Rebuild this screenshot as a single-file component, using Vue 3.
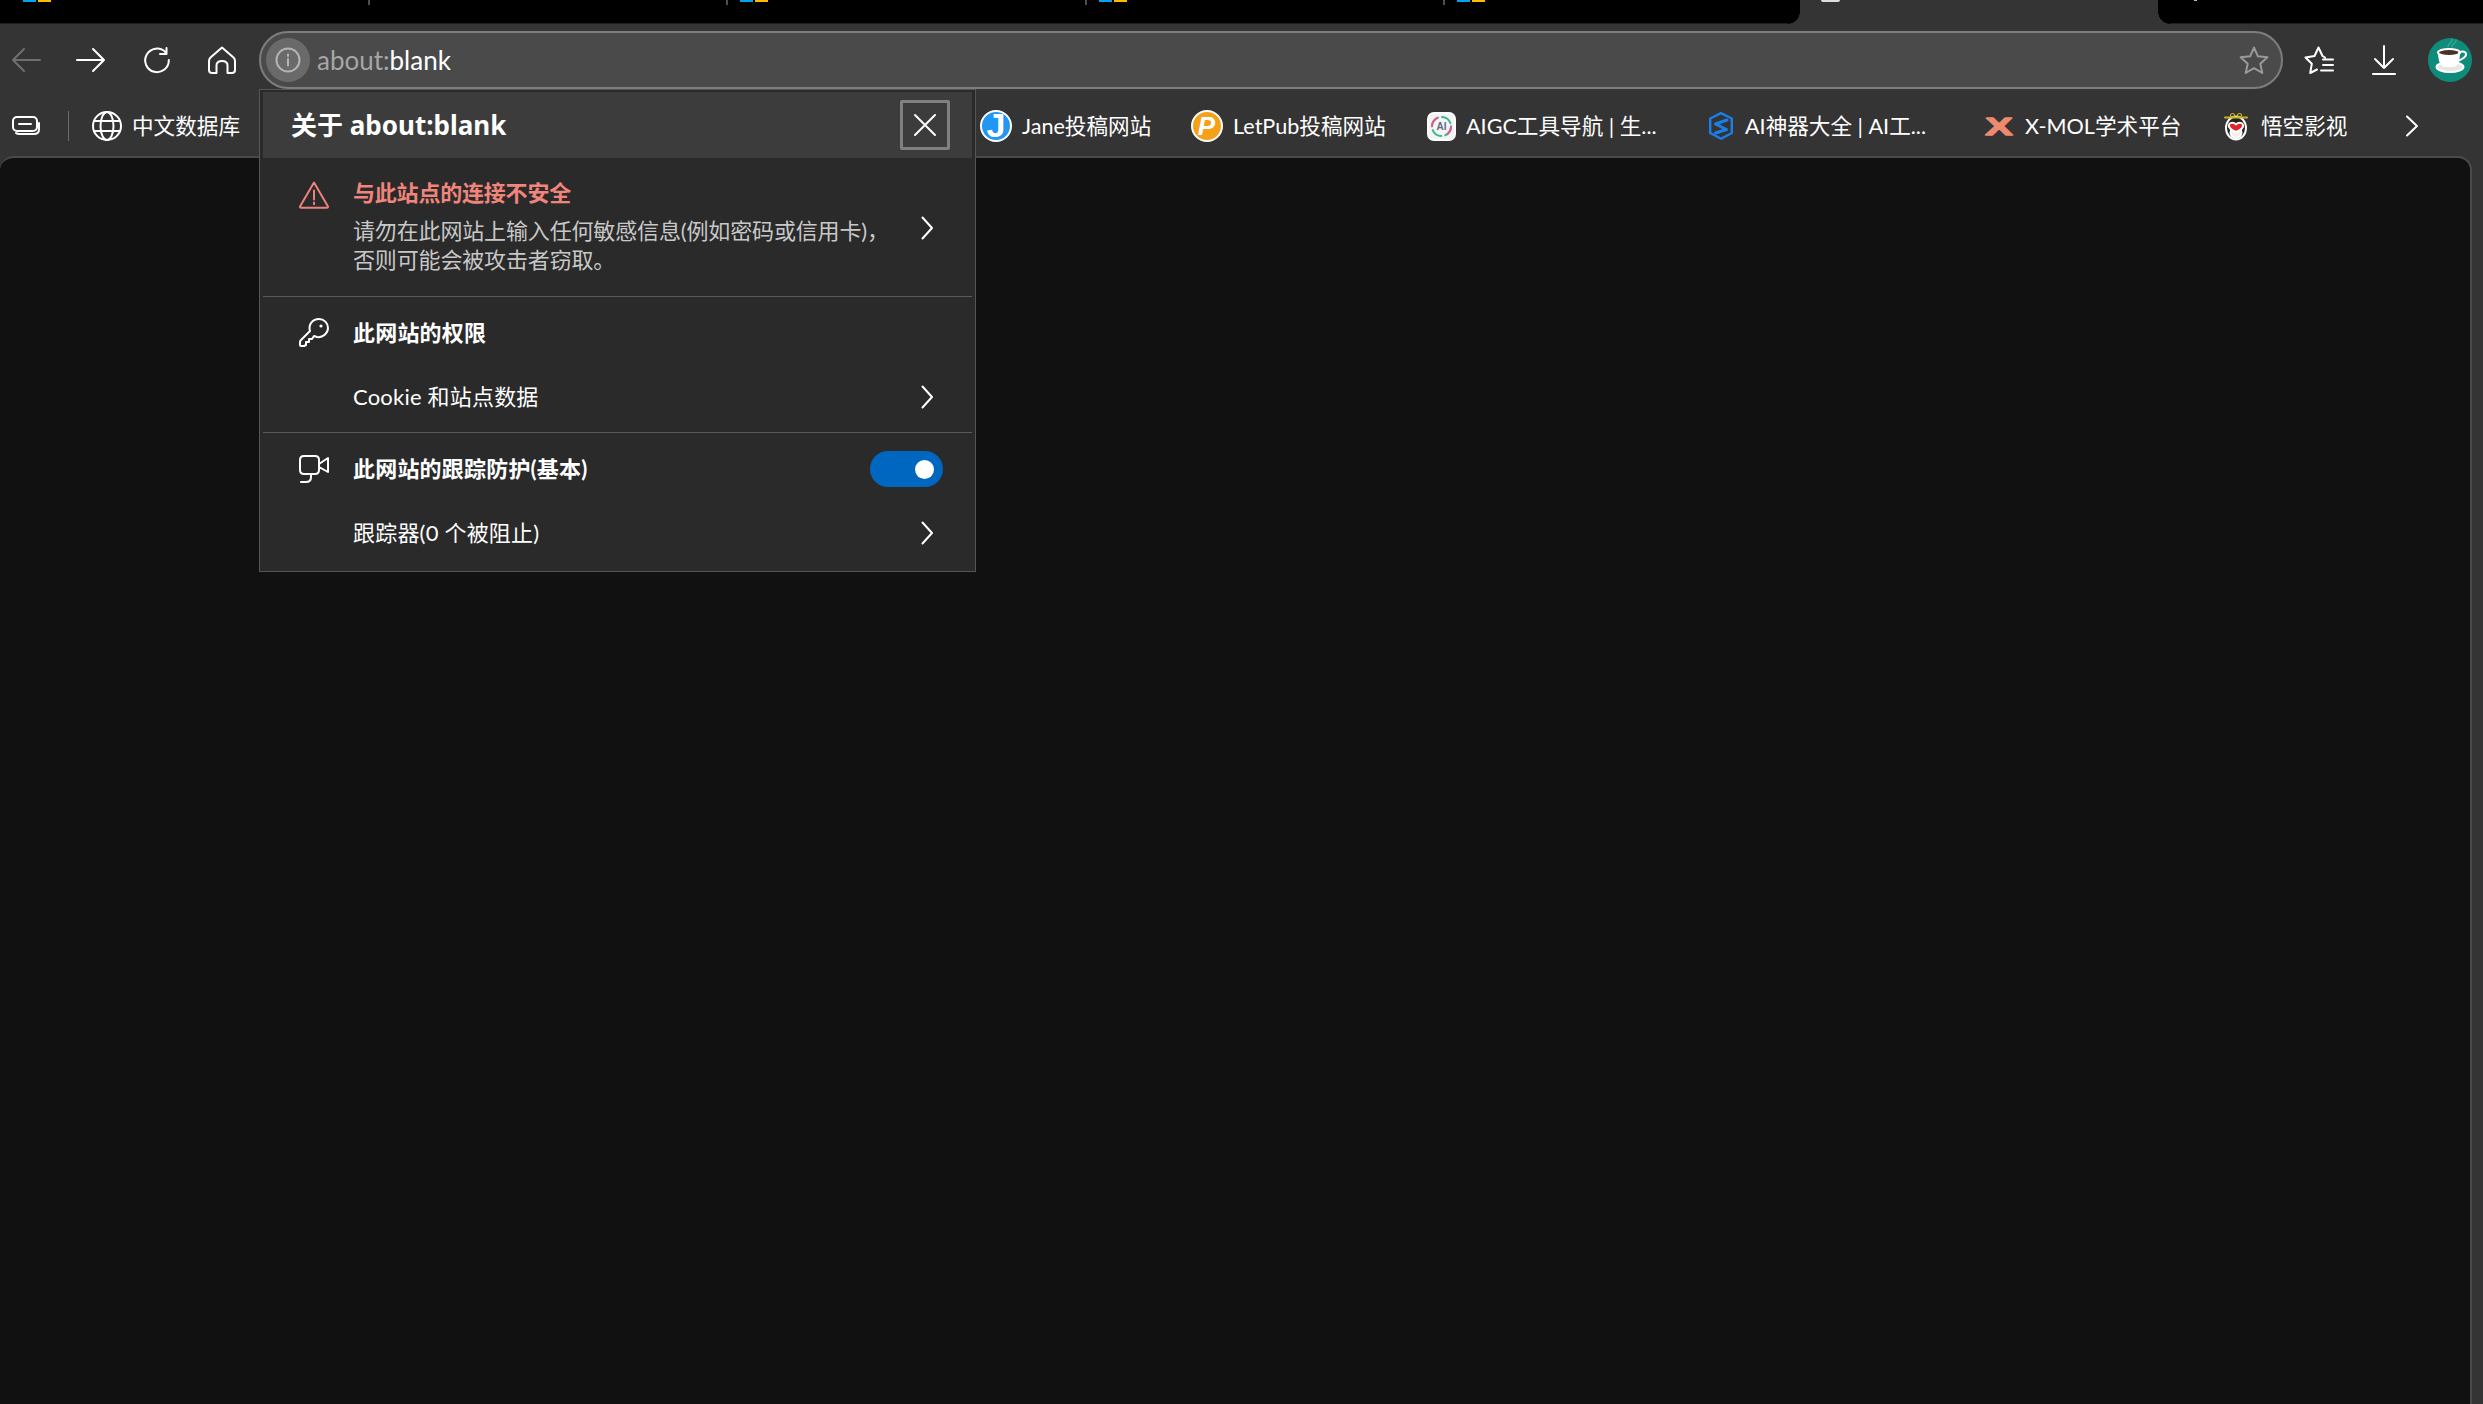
<template>
  <div class="browser">
    <div class="tabstrip">
      <div v-for="tab in tabs" :key="tab.id" class="tab" :class="{ 'tab--active': tab.active, 'tab--sep': tab.sep }">
        <span v-if="tab.logo" class="tab__logo"><i class="blue"></i><i class="yellow"></i></span>
        <span v-if="tab.active" class="tab__favicon"></span>
        <span v-if="tab.dot" class="tab__dot"></span>
      </div>
    </div>

    <div class="toolbar">
      <div class="navrow">
        <div class="navbtns">
          <button class="navbtn navbtn--off">
            <svg width="30" height="26" viewBox="0 0 30 26"><path d="M29 13H2M13 2 2 13l11 11" /></svg>
          </button>
          <button class="navbtn">
            <svg width="30" height="26" viewBox="0 0 30 26"><path d="M1 13h27M17 2l11 11-11 11" /></svg>
          </button>
          <button class="navbtn">
            <svg width="28" height="26" viewBox="0 0 28 26"><path d="M22.5 5.2A11.8 11.8 0 1 0 25.8 13M23.5 1v6h-6.5" /></svg>
          </button>
          <button class="navbtn">
            <svg width="28" height="28" viewBox="0 0 28 28"><path d="M14 1.5 25.5 11.5Q27 13 27 15V24Q27 27 24 27H19.5V19.5Q19.5 15 14 15T8.5 19.5V27H4Q1 27 1 24V15Q1 13 2.5 11.5Z" /></svg>
          </button>
        </div>

        <div class="addressbar">
          <span class="siteinfo">
            <svg width="26" height="26" viewBox="0 0 26 26"><circle cx="13" cy="13" r="11.5" /><path d="M13 12v6.5M13 7.5v1.6" /></svg>
          </span>
          <span class="url"><span class="url__scheme">about:</span>blank</span>
          <svg class="addr-star" width="30" height="29" viewBox="0 0 30 29"><path d="M15 1.6l3.9 8.7 9.5 1-7.1 6.4 2 9.3L15 22.2 6.7 27l2-9.3-7.1-6.4 9.5-1z" /></svg>
        </div>

        <div class="actions">
          <svg class="act-fav" width="30" height="29" viewBox="0 0 30 29"><path d="M21 11.5 18.5 10 14.5 1.5 10.5 10 1.5 11.5 7.8 17.8 6.2 27 13 23.5M19 13.5h10M19 19h10M17 24.5h12" /></svg>
          <svg class="act-dl" width="24" height="30" viewBox="0 0 24 30"><path d="M12 1v22M3 14l9 9 9-9M1 29h22" /></svg>
          <span class="avatar">
            <svg width="44" height="44" viewBox="0 0 44 44">
              <path class="steam" d="M20 9c-1-3 5-4 4-8M24 9c-1-3 5-4 4-7" />
              <ellipse cx="22" cy="29" rx="13.5" ry="5" fill="#e8e6e2" />
              <path d="M10 14h22c0 8-2 14-6 15H16c-4-1-6-7-6-15z" fill="#fff" />
              <ellipse cx="21" cy="14.5" rx="11" ry="3.6" fill="#4b3226" />
              <path class="handle" d="M31 15c3-3 8-1 7 2s-4 4-8 6" />
            </svg>
          </span>
        </div>
      </div>

      <div class="bookmarks">
        <svg class="collections" width="28" height="20" viewBox="0 0 28 20">
          <rect x="1" y="1" width="24" height="14" rx="4" />
          <path d="M7 8h12M27 7v6q0 5-5 5H8q-3 0-4-1" />
        </svg>
        <span class="bm-divider"></span>
        <div class="bm bm--first">
          <svg class="globe" width="30" height="30" viewBox="0 0 30 30">
            <circle cx="15" cy="15" r="14" />
            <ellipse cx="15" cy="15" rx="6.5" ry="14" />
            <path d="M2.5 10h25M2.5 20h25" />
          </svg>
          <span class="bm__text">中文数据库</span>
        </div>
        <div class="bm">
          <svg width="30" height="30" viewBox="0 0 30 30">
            <circle cx="15" cy="15" r="15" fill="#2196f3" />
            <text x="15" y="26" class="logo-j">J</text>
          </svg>
          <span class="bm__text">Jane投稿网站</span>
        </div>
        <div class="bm">
          <svg width="30" height="30" viewBox="0 0 30 30">
            <circle cx="15" cy="15" r="15" fill="#f5a01a" />
            <text x="14.5" y="24" class="logo-p">P</text>
          </svg>
          <span class="bm__text">LetPub投稿网站</span>
        </div>
        <div class="bm">
          <svg width="27" height="27" viewBox="0 0 27 27">
            <rect width="27" height="27" rx="6" fill="#f4f4f4" />
            <circle cx="13.5" cy="13.5" r="9.5" fill="none" stroke="#3db88b" stroke-width="2" stroke-dasharray="11 4" />
            <circle cx="13.5" cy="13.5" r="9.5" fill="none" stroke="#e5578c" stroke-width="2" stroke-dasharray="8 22 10 30" />
            <text x="13.5" y="17" class="logo-ai">AI</text>
          </svg>
          <span class="bm__text">AIGC工具导航 | 生...</span>
        </div>
        <div class="bm bm--wide">
          <svg width="24" height="28" viewBox="0 0 24 28">
            <path d="M12 1.2 22.8 6.5V21L12 26.8 1.2 21V6.5Z" class="shield" />
            <path d="M18 8 6.5 12l11 5.5L6.5 21" class="shield shield--in" />
          </svg>
          <span class="bm__text">AI神器大全 | AI工...</span>
        </div>
        <div class="bm bm--wide">
          <svg width="28" height="18" viewBox="0 0 28 18">
            <text x="14" y="17.5" class="logo-x" textLength="27" lengthAdjust="spacingAndGlyphs">X</text>
          </svg>
          <span class="bm__text">X-MOL学术平台</span>
        </div>
        <div class="bm bm--wukong">
          <svg width="28" height="28" viewBox="0 0 28 28">
            <ellipse cx="14" cy="16" rx="10" ry="11.5" fill="#2a1f1a" />
            <path d="M3 5.5h22" stroke="#c8b42a" stroke-width="2" />
            <circle cx="10.5" cy="3.5" r="2" fill="none" stroke="#c8b42a" stroke-width="1.2" />
            <circle cx="17.5" cy="3.5" r="2" fill="none" stroke="#c8b42a" stroke-width="1.2" />
            <ellipse cx="14" cy="20.5" rx="5.5" ry="5.5" fill="#f3efec" />
            <path d="M14 20C9 18 6 15 7 12.5c1-2.5 5-2.5 7 0 2-2.5 6-2.5 7 0 1 2.500-2 5.500-7 7.500z" fill="#e2212b" />
          </svg>
          <span class="bm__text">悟空影视</span>
        </div>
        <svg class="bm-more" width="14" height="22" viewBox="0 0 14 22"><path d="M2 1.500 12 11 2 20.500" /></svg>
      </div>
    </div>

    <div class="page">
      <div class="content"></div>
    </div>

    <!-- 站点信息弹窗 -->
    <div class="popup">
      <div class="popup__head">
        <span class="popup__title">关于 about:blank</span>
        <button class="popup__close">
          <svg width="22" height="22" viewBox="0 0 22 22"><path d="M1 1l20 20M21 1 1 21" /></svg>
        </button>
      </div>

      <div class="section section--warn">
        <svg class="row__icon warn-icon" width="30" height="28" viewBox="0 0 30 28">
          <path d="M15 1.500 28.700 25q1 1.800-1 1.800H2.300q-2 0-1-1.800zM15 9.500v9M15 21.500v1.800" />
        </svg>
        <div class="warn-text">
          <div class="warn-title">与此站点的连接不安全</div>
          <div class="warn-desc">请勿在此网站上输入任何敏感信息(例如密码或信用卡)，<br />否则可能会被攻击者窃取。</div>
        </div>
        <svg class="chevron" width="12" height="24" viewBox="0 0 12 24"><path d="M1.500 1.500 11 12 1.500 22.500" /></svg>
      </div>

      <div class="section section--perm">
        <div class="row">
          <svg class="row__icon" width="30" height="30" viewBox="0 0 30 30">
            <path d="M11 13C9 6 14 1 20 1c5 0 9 4 9 9s-5 10-11 9l-3-1-2 3h-3v3H7v3l-2 1H2q-1 0-1-1v-3q0-1 1-2z" />
            <circle cx="22" cy="8" r="1.600" class="dot" />
          </svg>
          <span class="row__label row__label--bold">此网站的权限</span>
        </div>
        <div class="row">
          <span class="row__label">Cookie 和站点数据</span>
          <svg class="chevron" width="12" height="24" viewBox="0 0 12 24"><path d="M1.500 1.500 11 12 1.500 22.500" /></svg>
        </div>
      </div>

      <div class="section">
        <div class="row">
          <svg class="row__icon" width="30" height="28" viewBox="0 0 30 28">
            <path d="M1 5q0-4 4-4h11q4 0 4 4v10q0 4-4 4H5q-4 0-4-4zM20 9l9-6v14l-9-5M12 19v3q0 5-5 5H2" />
          </svg>
          <span class="row__label row__label--bold">此网站的跟踪防护(基本)</span>
          <span class="switch"><i></i></span>
        </div>
        <div class="row">
          <span class="row__label">跟踪器(0 个被阻止)</span>
          <svg class="chevron" width="12" height="24" viewBox="0 0 12 24"><path d="M1.500 1.500 11 12 1.500 22.500" /></svg>
        </div>
      </div>
    </div>
  </div>
</template>

<script setup>
// 顶部标签栏：只露出图标的一点点
const tabs = [
  { id: 0, logo: true },
  { id: 1, sep: true },
  { id: 2, sep: true, logo: true },
  { id: 3, sep: true, logo: true },
  { id: 4, sep: true, logo: true },
  { id: 5, active: true },
  { id: 6, dot: true },
]
</script>

<style>
html,
body {
  margin: 0;
  background: #111;
}
</style>

<style scoped>
.browser {
  position: relative;
  width: 2483px;
  height: 1404px;
  display: flex;
  flex-direction: column;
  overflow: hidden;
  background: #343434;
  color: #fff;
  font-family: Lato, "Noto Sans CJK SC", sans-serif;
  font-size: 22px;
}

svg {
  display: block;
  flex: none;
  fill: none;
  overflow: visible;
  stroke: currentColor;
  stroke-width: 2;
  stroke-linecap: round;
  stroke-linejoin: round;
}

svg text {
  stroke: none;
  font-family: "Liberation Sans", sans-serif;
  text-anchor: middle;
}

button {
  padding: 0;
  border: 0;
  background: none;
  color: inherit;
}

/* ---------- 标签栏 ---------- */
.tabstrip {
  flex: none;
  height: 24px;
  padding-left: 9px;
  display: flex;
  background: #000;
  border-bottom: 1px solid #1f1f1f;
  box-sizing: border-box;
}

.tab {
  position: relative;
  flex: none;
  width: 358.5px;
  height: 24px;
  box-sizing: border-box;
  padding-left: 14px;
}

.tab--sep::before {
  content: '';
  position: absolute;
  left: 0;
  top: 0;
  width: 2px;
  height: 5px;
  background: #4f4f4f;
}

.tab__logo {
  display: flex;
  gap: 2px;
  height: 2px;
}

.tab__logo i {
  width: 13px;
  height: 2px;
}

.blue {
  background: #00a4ef;
}

.yellow {
  background: #ffb900;
}

.tab--active {
  margin-left: -2px;
  background: #343434;
  padding-left: 21px;
}

.tab--active::before,
.tab--active::after {
  content: '';
  position: absolute;
  bottom: 0;
  width: 12px;
  height: 12px;
}

.tab--active::before {
  left: -12px;
  background: radial-gradient(circle at 0 0, #000 11.5px, #343434 12px);
}

.tab--active::after {
  right: -12px;
  background: radial-gradient(circle at 100% 0, #000 11.5px, #343434 12px);
}

.tab__favicon {
  display: block;
  width: 19px;
  height: 2px;
  background: #ddd;
  border-radius: 0 0 9px 9px;
}

.tab__dot {
  display: block;
  width: 3px;
  height: 1px;
  margin-left: 22px;
  background: #bbb;
}

/* ---------- 工具栏 ---------- */
.toolbar {
  flex: none;
  height: 132px;
  background: #343434;
}

.navrow {
  height: 58px;
  padding: 7px 11px 0 0;
  display: flex;
  align-items: center;
}

.navbtns {
  display: flex;
  margin-left: -7px;
}

.navbtn {
  width: 65.5px;
  height: 58px;
  display: flex;
  align-items: center;
  justify-content: center;
  color: #fff;
}

.navbtn--off {
  color: #6f6f6f;
}

.addressbar {
  flex: 1;
  height: 58px;
  margin-left: 4px;
  padding: 0 12px 0 5px;
  box-sizing: border-box;
  display: flex;
  align-items: center;
  border: 2px solid #7d7d7d;
  border-radius: 29px;
  background: #4a4a4a;
}

.siteinfo {
  width: 44px;
  height: 44px;
  display: flex;
  align-items: center;
  justify-content: center;
  border-radius: 50%;
  background: #6a6a6a;
  color: #b5b5b5;
}

.url {
  margin-left: 7px;
  font-size: 26px;
  color: #fff;
}

.url__scheme {
  color: #a6a6a6;
}

.addr-star {
  margin-left: auto;
  color: #9a9a9a;
}

.actions {
  display: flex;
  align-items: center;
}

.act-fav {
  margin-left: 21px;
}

.act-dl {
  margin-left: 38px;
}

.avatar {
  margin-left: 32px;
  width: 44px;
  height: 44px;
  border-radius: 50%;
  background: #0f8b7a;
  overflow: hidden;
}

.avatar path {
  stroke: none;
}

.avatar .steam {
  stroke: #3aa595;
  fill: none;
  stroke-width: 1.5;
}

.avatar .handle {
  stroke: #fff;
  fill: none;
  stroke-width: 2;
}

/* ---------- 收藏夹栏 ---------- */
.bookmarks {
  height: 60px;
  display: grid;
  grid-template-columns: 56px 24px 889px 211px 236px 281px 276px 240px 180px auto;
  align-items: center;
  padding-left: 12px;
  margin-top: 7px;
}

.collections {
  color: #fff;
}

.bm-divider {
  width: 1px;
  height: 30px;
  background: #6a6a6a;
}

.bm {
  display: flex;
  align-items: center;
  gap: 11px;
  white-space: nowrap;
  color: #fff;
}

.bm--first {
  gap: 10px;
}

.bm__text {
  padding-bottom: 4px;
  font-size: 21.6px;
}

.bm--wukong {
  margin-left: -3px;
}

.bm--wide {
  gap: 12px;
}

.bm-more {
  color: #fff;
}

.logo-j {
  font-size: 34px;
  font-weight: 700;
  fill: #fff;
}

.logo-p {
  font-size: 26px;
  font-weight: 700;
  font-style: italic;
  fill: #fff;
}

.logo-ai {
  font-size: 10px;
  font-weight: 700;
  fill: #5c6a8a;
}

svg text.logo-x {
  font-size: 24px;
  font-weight: 700;
  fill: #ec8a70;
  stroke: #ec8a70;
  stroke-width: 1.4;
}

.shield {
  stroke: #1a7fe8;
  stroke-width: 2.4;
}

.shield--in {
  stroke-width: 3;
}

/* ---------- 页面内容 ---------- */
.page {
  flex: 1;
  padding-right: 11px;
}

.content {
  height: 100%;
  box-sizing: border-box;
  border-top: 2px solid #4a4a4a;
  border-right: 2px solid #4a4a4a;
  border-radius: 14px 14px 0 0;
  background: #111;
}

/* ---------- 弹窗 ---------- */
.popup {
  position: absolute;
  left: 259px;
  top: 89px;
  width: 717px;
  height: 483px;
  box-sizing: border-box;
  padding: 2px 3px 0;
  border: 1px solid #555;
  background: #2a2a2a;
}

.popup__head {
  height: 66px;
  padding: 0 22px 0 28px;
  display: flex;
  align-items: center;
  justify-content: space-between;
  background: #3c3c3c;
}

.popup__title {
  padding-bottom: 2px;
  font-family: "Noto Sans", "Noto Sans CJK SC", sans-serif;
  font-size: 26px;
  font-weight: 700;
}

.popup__close {
  width: 50px;
  height: 50px;
  display: flex;
  align-items: center;
  justify-content: center;
  box-sizing: border-box;
  border: 3px solid #808080;
  border-radius: 2px;
  color: #fff;
}

.section {
  padding-top: 4px;
  border-top: 1px solid #5a5a5a;
}

.section--perm {
  padding-bottom: 3px;
}

.section--warn {
  height: 138px;
  box-sizing: border-box;
  padding: 20px 39px 0 36px;
  border-top: 0;
  display: flex;
  align-items: flex-start;
}

.warn-icon {
  margin-top: 3px;
  color: #ea837b;
}

.warn-text {
  flex: 1;
  margin-left: 24px;
}

.warn-title {
  font-size: 22px;
  line-height: 30px;
  font-weight: 700;
  letter-spacing: -0.2px;
  color: #f0857c;
}

.warn-desc {
  margin-top: 8px;
  line-height: 29px;
  letter-spacing: -0.15px;
  color: #c8c8c8;
  white-space: nowrap;
}

.section--warn .chevron {
  margin-top: 38px;
}

.row {
  height: 64px;
  padding: 0 29px 0 90px;
  position: relative;
  display: flex;
  align-items: center;
}

.row:has(.row__icon) {
  padding-left: 36px;
}

.row:has(.row__icon) .row__label {
  margin-left: 24px;
}

.row .chevron {
  margin-left: auto;
  margin-right: 10px;
}

.row__label {
  padding-bottom: 4px;
  letter-spacing: 0.2px;
  color: #fff;
}

.row__label--bold {
  font-weight: 700;
}

.dot {
  fill: #fff;
  stroke: none;
}

.switch {
  margin-left: auto;
  width: 73px;
  height: 36px;
  display: flex;
  align-items: center;
  justify-content: flex-end;
  padding-right: 9px;
  box-sizing: border-box;
  border-radius: 18px;
  background: #0067c0;
}

.switch i {
  width: 19px;
  height: 19px;
  border-radius: 50%;
  background: #fff;
}
</style>
